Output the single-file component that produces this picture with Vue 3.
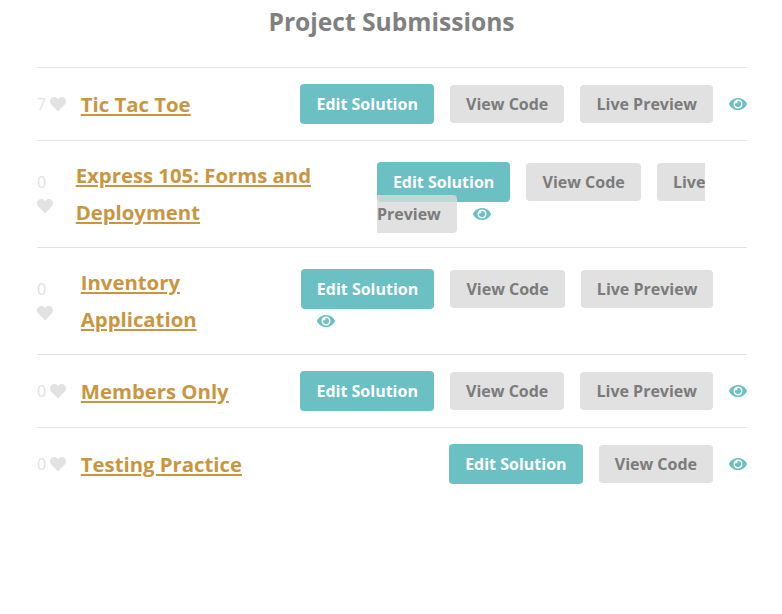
<template>
  <div class="page">
    <h2 class="heading">Project Submissions</h2>
    <div class="list">
      <div v-for="row in rows" :key="row.title" class="row">
        <div class="likes">
          <span class="count">{{ row.likes }}</span> <svg class="heart" viewBox="0 0 512 512"><path d="M462.3 62.6C407.5 15.9 326 24.3 275.7 76.2L256 96.5l-19.7-20.3C186.1 24.3 104.5 15.9 49.7 62.6c-62.8 53.6-66.1 149.8-9.9 207.9l193.5 199.8c12.5 12.9 32.8 12.9 45.3 0l193.5-199.8c56.3-58.1 53-154.3-9.8-207.9z" /></svg>
        </div>
        <a class="title" href="#">{{ row.title }}</a>
        <div class="actions" :class="{ wrapped: row.wrapped }">
          <a class="edit" href="#">Edit Solution</a> <a class="btn" href="#">View Code</a><template v-if="row.live">{{ ' ' }}<a class="btn" href="#">Live Preview</a></template><svg class="eye" viewBox="0 0 576 512"><path d="M572.52 241.4C518.29 135.59 410.93 64 288 64S57.68 135.64 3.48 241.4a32.35 32.35 0 0 0 0 29.21C57.71 376.41 165.07 448 288 448s230.32-71.64 284.52-177.4a32.35 32.35 0 0 0 0-29.2zM288 400a144 144 0 1 1 144-144 143.93 143.93 0 0 1-144 144zm0-240a95.31 95.31 0 0 0-25.31 3.79 47.85 47.85 0 0 1-66.9 66.9A95.78 95.78 0 1 0 288 160z" /></svg>
        </div>
      </div>
    </div>
  </div>
</template>

<script setup>
const rows = [
  { title: 'Tic Tac Toe', likes: 7, live: true },
  { title: 'Express 105: Forms and Deployment', likes: 0, live: true, wrapped: true },
  { title: 'Inventory Application', likes: 0, live: true, wrapped: true },
  { title: 'Members Only', likes: 0, live: true },
  { title: 'Testing Practice', likes: 0, live: false }
];
</script>

<style>
body {
  background: #fff;
}
</style>

<style scoped>
.page {
  width: 710px;
  margin-left: 37px;
  font-family: "Open Sans", sans-serif;
}

.heading {
  margin: 0 0 25px;
  padding: 2px 1px 0 0;
  font-size: 24.6px;
  line-height: 40px;
  font-weight: 700;
  text-align: center;
  color: #808080;
}

.row {
  display: flex;
  align-items: center;
  min-height: 40px;
  padding: 16px 0;
  border-top: 1px solid #e2e2e2;
}

.likes {
  margin-right: 14.5px;
  font-size: 16px;
  line-height: 24px;
  color: #e2e2e2;
}

.heart {
  width: 16px;
  height: 16px;
  vertical-align: -2px;
  fill: #e2e2e2;
}

.title {
  font-size: 20.32px;
  line-height: 37px;
  font-weight: 700;
  color: #c9963f;
}

.actions {
  flex-shrink: 0.98;
  margin-left: auto;
  font-size: 16px;
  line-height: 32px;
  font-weight: 700;
}

.actions.wrapped {
  padding-top: 8px;
}

.edit {
  display: inline-block;
  margin: -4px 0;
  padding: 8px 16px;
  line-height: 24px;
  border-radius: 4px;
  background: #6bc0c3;
  color: #fff;
  text-decoration: none;
}

.btn {
  margin-left: 12px;
  padding: 8px 16px;
  border-radius: 4px;
  background: rgba(217, 217, 217, 0.8);
  color: #7b7b7b;
  text-decoration: none;
}

.eye {
  width: 18px;
  height: 16px;
  margin-left: 16px;
  vertical-align: -2px;
  fill: #6bc0c3;
}
</style>
